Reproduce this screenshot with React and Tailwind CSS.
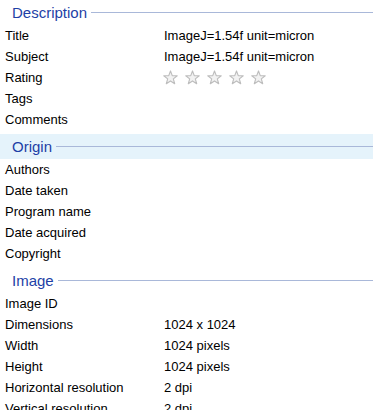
import React from 'react';

const groups = [
  {
    title: 'Description',
    rows: [
      ['Title', 'ImageJ=1.54f unit=micron'],
      ['Subject', 'ImageJ=1.54f unit=micron'],
      ['Rating', 'stars'],
      ['Tags', ''],
      ['Comments', ''],
    ],
  },
  {
    title: 'Origin',
    hover: true,
    rows: [
      ['Authors', ''],
      ['Date taken', ''],
      ['Program name', ''],
      ['Date acquired', ''],
      ['Copyright', ''],
    ],
  },
  {
    title: 'Image',
    rows: [
      ['Image ID', ''],
      ['Dimensions', '1024 x 1024'],
      ['Width', '1024 pixels'],
      ['Height', '1024 pixels'],
      ['Horizontal resolution', '2 dpi'],
      ['Vertical resolution', '2 dpi'],
    ],
  },
];

function Star() {
  return (
    <svg width="15" height="15" viewBox="0 0 24 24">
      <polygon
        points="12,1.5 14.8,9 22.8,9.2 16.5,14.2 18.7,22 12,17.5 5.3,22 7.5,14.2 1.2,9.2 9.2,9"
        fill="#f2f2f2"
        stroke="#bdbdbd"
        strokeWidth="1.8"
        strokeLinejoin="round"
      />
    </svg>
  );
}

export default function App() {
  return (
    <div className="w-[373px] h-[410px] overflow-hidden bg-white text-[13px] text-black" style={{ fontFamily: '"Liberation Sans", Arial, sans-serif' }}>
      <div>
        {groups.map((g, gi) => (
          <div key={g.title} className={gi === 0 ? '' : 'mt-[4px]'}>
            <div className={`h-[25px] flex items-center pl-[12px] ${g.hover ? 'bg-[#e5f3fb]' : ''}`}>
              <span className="text-[15px] text-[#1e3fa6] leading-none">{g.title}</span>
              <div className="flex-1 h-px bg-[#a9b8d9] ml-[4px]" />
            </div>
            {g.rows.map(([label, value]) => (
              <div key={label} className="h-[21px] flex items-center">
                <span className="w-[164px] pl-[5px] shrink-0 whitespace-nowrap">{label}</span>
                {value === 'stars' ? (
                  <div className="flex gap-[7px] ml-[-1px]">
                    <Star /><Star /><Star /><Star /><Star />
                  </div>
                ) : (
                  <span className="whitespace-nowrap">{value}</span>
                )}
              </div>
            ))}
          </div>
        ))}
      </div>
    </div>
  );
}
